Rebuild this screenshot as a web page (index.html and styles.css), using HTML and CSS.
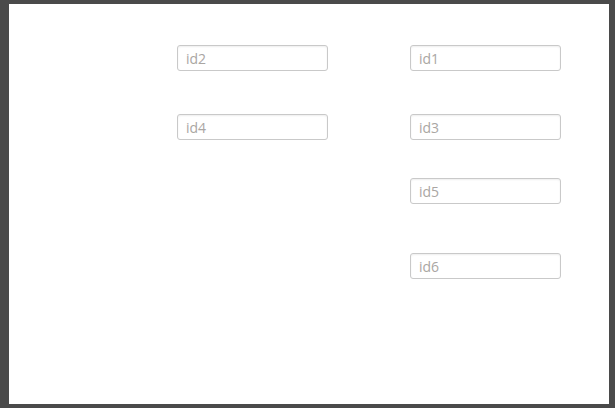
FILE: index.html
```html
<!DOCTYPE html>
<html>
<head>
    <meta charset="UTF-8">
    <title>Form</title>
    <link rel="stylesheet" href="styles.css">
</head>
<body>
    <div class="canvas">
        <div class="column left">
            <input class="field" type="text" placeholder="id2">
            <input class="field row2" type="text" placeholder="id4">
        </div>
        <div class="column right">
            <input class="field" type="text" placeholder="id1">
            <input class="field row2" type="text" placeholder="id3">
            <input class="field row3" type="text" placeholder="id5">
            <input class="field row4" type="text" placeholder="id6">
        </div>
    </div>
</body>
</html>
```

FILE: styles.css
```css
html, body {
    margin: 0;
    height: 100%;
}
body {
    background-color: #4a4a4a;
    padding: 4px 6px 4px 9px;
    box-sizing: border-box;
    font-family: "Open Sans", "DejaVu Sans", sans-serif;
}
.canvas {
    width: 600px;
    height: 400px;
    background: #fff;
    display: flex;
    align-items: flex-start;
    padding: 41px 0 0 168px;
    box-sizing: border-box;
}
.column {
    display: flex;
    flex-direction: column;
}
.right {
    margin-left: 82px;
}
.field {
    width: 151px;
    height: 26px;
    box-sizing: border-box;
    margin: 0;
    padding: 0 8px;
    border: 1px solid #c9c9c9;
    border-radius: 3px;
    box-shadow: inset 0 1px 2px rgba(0,0,0,0.07);
    font-family: inherit;
    font-size: 14px;
    color: #333;
    background: #fff;
    outline: none;
}
.field::placeholder {
    color: #aaa6a3;
}
.row2 {
    margin-top: 43px;
}
.row3 {
    margin-top: 38px;
}
.row4 {
    margin-top: 49px;
}
```
